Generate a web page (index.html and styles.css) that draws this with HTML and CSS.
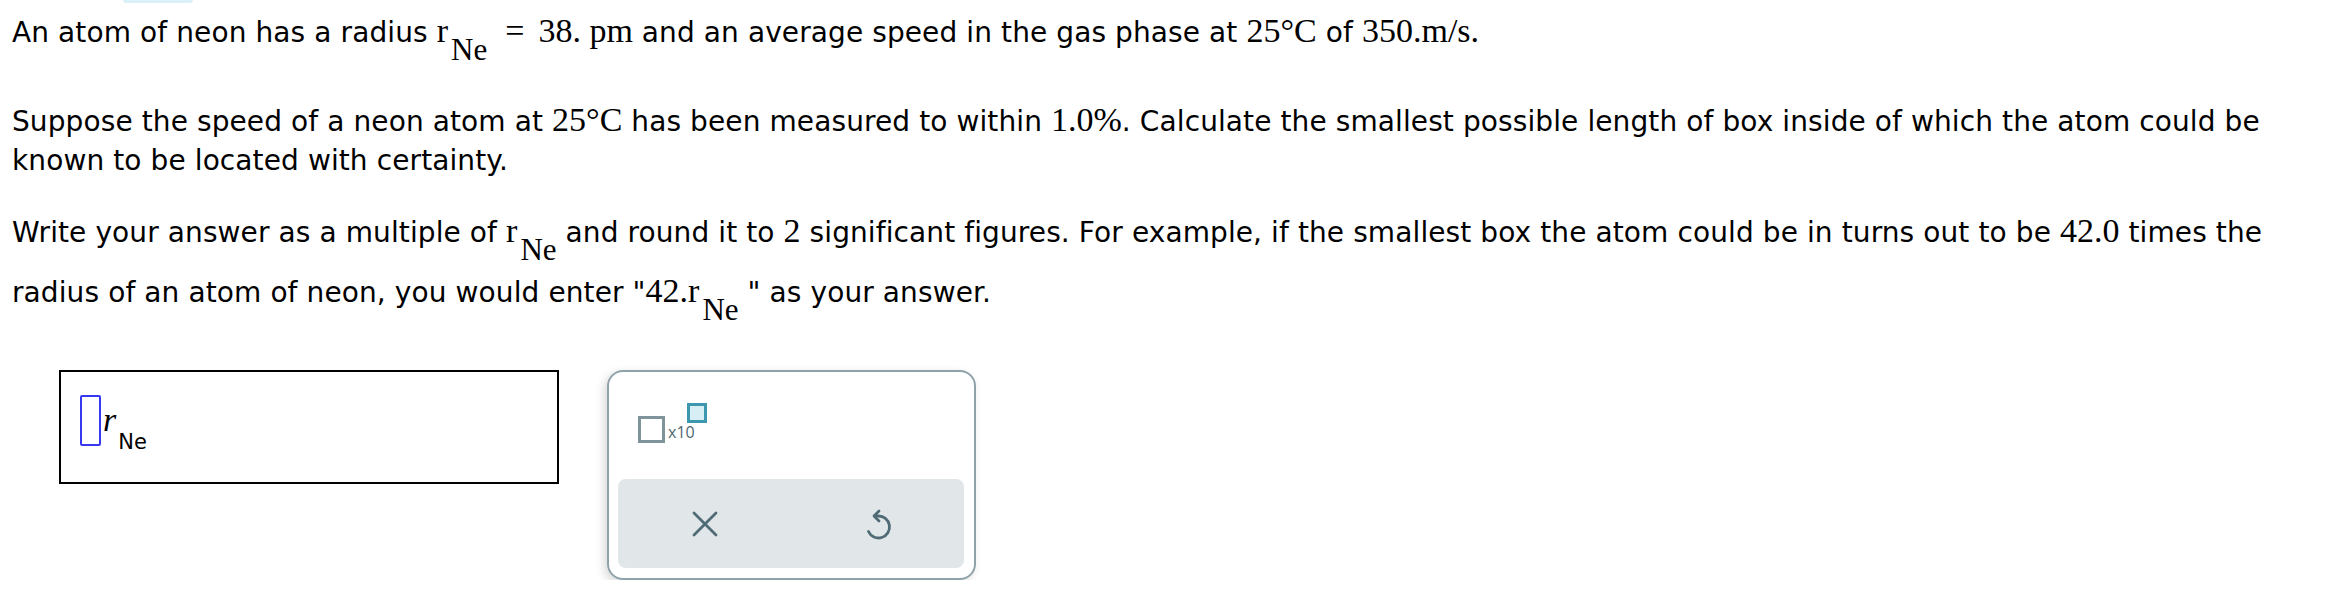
FILE: index.html
```html
<!DOCTYPE html>
<html>
<head>
<meta charset="utf-8">
<link rel="stylesheet" href="styles.css">
</head>
<body>
<div class="tab"></div>
<div class="question">
  <p class="p1">An atom of neon has a radius <span class="m">r<span class="sub">Ne</span><span class="eq">=</span>38. pm</span> and an average speed in the gas phase at <span class="m">25°C</span> of <span class="m">350.m/s.</span></p>
  <p class="p2">Suppose the speed of a neon atom at <span class="m">25°C</span> has been measured to within <span class="m">1.0%</span>. Calculate the smallest possible length of box inside of which the atom could be<br>known to be located with certainty.</p>
  <p class="p3">Write your answer as a multiple of <span class="m">r<span class="sub">Ne</span></span> and round it to <span class="m">2</span> significant figures. For example, if the smallest box the atom could be in turns out to be <span class="m">42.0</span> times the<br>radius of an atom of neon, you would enter "<span class="m">42.r<span class="sub">Ne</span></span> " as your answer.</p>
</div>
<div class="answer-row">
  <div class="answer-box">
    <span class="slot"></span>
    <span class="var">r</span>
    <span class="var-sub">Ne</span>
  </div>
  <div class="keypad">
    <div class="sci">
      <span class="base"></span>
      <span class="x10">x10</span>
      <span class="exp"></span>
    </div>
    <div class="actions">
      <div class="btn">
        <svg width="26" height="26" viewBox="0 0 26 26"><path d="M2 2 L24 24 M24 2 L2 24" stroke="#4f6b76" stroke-width="2.8" stroke-linecap="round" fill="none"/></svg>
      </div>
      <div class="btn">
        <svg width="30" height="34" viewBox="0 0 30 34"><path d="M11.5 9 H15 A11 11 0 1 1 5.47 24.5" stroke="#4f6b76" stroke-width="2.8" stroke-linecap="round" fill="none"/><path d="M16 4 L11 9 L16 14" stroke="#4f6b76" stroke-width="2.8" stroke-linecap="round" stroke-linejoin="round" fill="none"/></svg>
      </div>
    </div>
  </div>
</div>
</body>
</html>
```

FILE: styles.css
```css
body {
  margin: 0;
  background: #fff;
  color: #000;
  font-family: "DejaVu Sans", Verdana, sans-serif;
  font-size: 28px;
  letter-spacing: 0.1px;
}

.tab {
  margin-left: 123px;
  width: 70px;
  height: 3px;
  background: #dcf0f8;
  border-radius: 0 0 10px 10px;
}

.question {
  padding: 0 12px;
  white-space: nowrap;
}

.question p {
  margin: 0;
}

.p1 {
  padding-top: 8px;
  line-height: 39px;
}

.p2 {
  padding-top: 48px;
  line-height: 39px;
}

.p3 {
  padding-top: 22px;
  line-height: 58px;
}

.m {
  font-family: "Liberation Serif", "Times New Roman", serif;
  font-size: 34px;
  letter-spacing: 0;
}

.sub {
  font-size: 31px;
  position: relative;
  top: 18px;
  margin-left: 3px;
}

.eq {
  margin: 0 14px 0 18px;
}

.answer-row {
  display: flex;
  align-items: flex-start;
  gap: 48px;
  margin: 48px 0 0 59px;
  letter-spacing: 0;
}

.answer-box {
  box-sizing: border-box;
  width: 500px;
  height: 114px;
  border: 2px solid #000;
  padding: 23px 0 0 19px;
  display: flex;
  align-items: flex-start;
}

.slot {
  box-sizing: border-box;
  width: 21px;
  height: 51px;
  border: 2px solid #3838f0;
  border-radius: 2px;
}

.var {
  font-family: "Liberation Serif", "Times New Roman", serif;
  font-style: italic;
  font-size: 34px;
  line-height: 34px;
  margin: 8px 0 0 2px;
}

.var-sub {
  font-family: "DejaVu Sans", Verdana, sans-serif;
  font-size: 21px;
  line-height: 21px;
  margin: 37px 0 0 2px;
}

.keypad {
  box-sizing: border-box;
  width: 369px;
  height: 210px;
  border: 2px solid #8fa2aa;
  border-radius: 16px;
  box-shadow: -3px 3px 10px rgba(0, 0, 0, 0.15);
  padding: 9px 10px 10px 9px;
  display: flex;
  flex-direction: column;
  justify-content: space-between;
}

.sci {
  display: flex;
  align-items: flex-start;
  margin: 22px 0 0 20px;
}

.base {
  box-sizing: border-box;
  width: 27px;
  height: 27px;
  border: 3px solid #7f939b;
  margin-top: 13px;
}

.x10 {
  font-family: "Open Sans", sans-serif;
  font-size: 16px;
  line-height: 16px;
  color: #4e6771;
  margin: 21px 0 0 3px;
}

.exp {
  box-sizing: border-box;
  width: 20px;
  height: 20px;
  border: 3px solid #3d97ae;
  background: #d6eef4;
  margin-left: -8px;
}

.actions {
  display: flex;
  height: 89px;
  background: #e1e6e9;
  border-radius: 8px;
}

.btn {
  flex: 1;
  display: flex;
  align-items: center;
  justify-content: center;
}
```
